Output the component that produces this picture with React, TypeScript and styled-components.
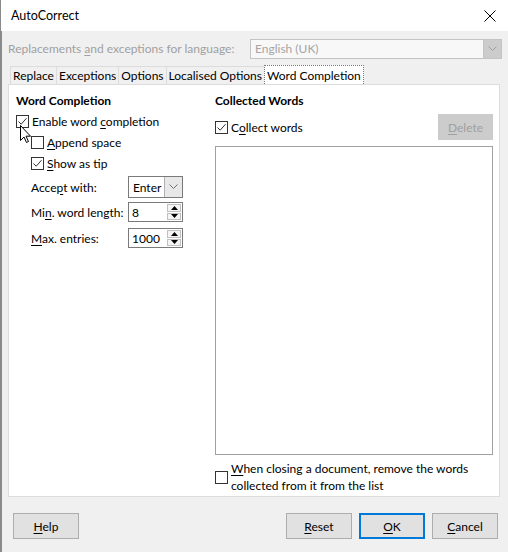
import * as React from 'react';
import styled, { createGlobalStyle } from 'styled-components';

const Global = createGlobalStyle`
  html, body {
    margin: 0;
    padding: 0;
    background: #f1f0f1;
  }
  body {
    font-family: Lato, "Noto Sans", sans-serif;
    font-size: 12px;
    color: #000;
    white-space: nowrap;
  }
`;

const Window = styled.div`
  position: relative;
  width: 508px;
  height: 552px;
  box-sizing: border-box;
  background: #f1f0f1;
  display: flex;
  flex-direction: column;
  overflow: hidden;
`;

const TitleBar = styled.div`
  height: 31px;
  flex-shrink: 0;
  background: #fff;
  display: flex;
  align-items: center;
  justify-content: space-between;
  padding: 0 12px 0 10px;
  border-left: 1px solid #8a8a8a;
`;

const Title = styled.span`
  font-size: 12.5px;
  margin-top: -1px;
`;

const Body = styled.div`
  flex: 1;
  display: flex;
  flex-direction: column;
  border-left: 2px solid #8a8a8a;
  padding: 7px 6px 0 6px;
`;

const LangRow = styled.div`
  display: flex;
  align-items: center;
  justify-content: space-between;
  height: 21px;
`;

const Muted = styled.span`
  color: #a0a0a0;
`;

const U = styled.span`
  text-decoration: underline;
  text-underline-offset: 2px;
`;

const Combo = styled.div<{ $w: number; $h?: number; $disabled?: boolean }>`
  width: ${(p) => p.$w}px;
  height: ${(p) => p.$h || 20}px;
  box-sizing: border-box;
  border: 1px solid ${(p) => (p.$disabled ? '#c4c4c4' : '#7a7a7a')};
  background: ${(p) => (p.$disabled ? '#f8f8f8' : '#fff')};
  color: ${(p) => (p.$disabled ? '#a5a5a5' : '#000')};
  display: flex;
  align-items: center;
  padding-left: 4px;
`;

const ComboText = styled.span`
  flex: 1;
`;

const DropBtn = styled.div<{ $disabled?: boolean }>`
  width: 17px;
  height: 100%;
  display: flex;
  align-items: center;
  justify-content: center;
  background: ${(p) => (p.$disabled ? '#cccccc' : '#e8e8e8')};
  border-left: 1px solid ${(p) => (p.$disabled ? '#c4c4c4' : '#b0b0b0')};
`;

const Tabs = styled.div`
  display: flex;
  align-items: flex-end;
  margin: 6px 0 0 2px;
  height: 19px;
`;

const Tab = styled.div<{ $active?: boolean }>`
  height: ${(p) => (p.$active ? 19 : 18)}px;
  box-sizing: border-box;
  display: flex;
  align-items: center;
  padding: 0 2px;
  background: ${(p) => (p.$active ? '#fff' : '#f1f0f1')};
  border: 1px ${(p) => (p.$active ? 'dotted #777' : 'solid #dcdcdc')};
  border-bottom: none;
  margin-right: ${(p) => (p.$active ? 0 : -1)}px;
  position: relative;
  z-index: ${(p) => (p.$active ? 1 : 0)};
`;

const Panel = styled.div`
  background: #fff;
  border: 1px solid #dcdcdc;
  width: 492px;
  height: 413px;
  flex-shrink: 0;
  box-sizing: border-box;
  display: flex;
  padding: 7px 6px 0 7px;
`;

const LeftCol = styled.div`
  width: 199px;
  display: flex;
  flex-direction: column;
`;

const RightCol = styled.div`
  width: 278px;
  display: flex;
  flex-direction: column;
`;

const Heading = styled.div`
  font-weight: bold;
  height: 17px;
  line-height: 17px;
`;

const CheckRow = styled.label<{ $indent?: number; $top?: number }>`
  display: flex;
  align-items: center;
  gap: 3px;
  margin-left: ${(p) => p.$indent || 0}px;
  margin-top: ${(p) => p.$top || 0}px;
  height: 21px;
`;

const Box = styled.span`
  width: 13px;
  height: 13px;
  box-sizing: border-box;
  border: 1px solid #333;
  background: #fff;
  display: inline-flex;
  align-items: center;
  justify-content: center;
  flex-shrink: 0;
`;

const FieldRow = styled.div<{ $top: number }>`
  display: flex;
  align-items: center;
  margin-left: 15px;
  margin-top: ${(p) => p.$top}px;
`;

const FieldLabel = styled.span`
  width: 97px;
`;

const Spin = styled.div`
  width: 55px;
  height: 20px;
  box-sizing: border-box;
  border: 1px solid #7a7a7a;
  background: #fff;
  display: flex;
  align-items: center;
  padding-left: 3px;
`;

const SpinBtns = styled.div`
  width: 15px;
  height: 100%;
  display: flex;
  flex-direction: column;
  justify-content: center;
  gap: 1px;
  padding: 1px 1px 1px 0;
  box-sizing: border-box;
`;

const SpinBtn = styled.div`
  flex: 1;
  border: 1px solid #c0c0c0;
  background: #f4f4f4;
  display: flex;
  align-items: center;
  justify-content: center;
`;

const CollectRow = styled.div`
  display: flex;
  align-items: center;
  justify-content: space-between;
  margin-top: 5px;
  height: 26px;
`;

const Button = styled.div<{ $w?: number; $disabled?: boolean; $default?: boolean }>`
  width: ${(p) => p.$w || 66}px;
  height: 26px;
  box-sizing: border-box;
  display: flex;
  align-items: center;
  justify-content: center;
  background: ${(p) => (p.$disabled ? '#cccccc' : '#e1e1e1')};
  color: ${(p) => (p.$disabled ? '#a0a0a0' : '#000')};
  border: 1px solid ${(p) => (p.$disabled ? '#cccccc' : p.$default ? '#0078d7' : '#adadad')};
  box-shadow: ${(p) => (p.$default ? 'inset 0 0 0 1px #0078d7' : 'none')};
`;

const ListBox = styled.div`
  margin-top: 6px;
  height: 309px;
  flex-shrink: 0;
  box-sizing: border-box;
  border: 1px solid #a0a0a0;
  background: #fff;
`;

const WrapCheck = styled.div`
  display: flex;
  align-items: center;
  gap: 3px;
  margin-top: 5px;
  line-height: 17px;
`;

const Footer = styled.div`
  display: flex;
  align-items: center;
  padding: 16px 4px 0 5px;
  gap: 7px;
`;

const Spacer = styled.div`
  flex: 1;
`;

const Cursor = styled.svg`
  position: absolute;
  left: 20px;
  top: 125px;
`;

const Check = () => (
  <svg width="11" height="11" viewBox="0 0 11 11">
    <path d="M1.5 5.5 L4.2 8.2 L9.5 2.2" fill="none" stroke="#333" strokeWidth="1" />
  </svg>
);

const Chevron = ({ color }: { color: string }) => (
  <svg width="9" height="6" viewBox="0 0 9 6">
    <path d="M0.5 0.5 L4.5 4.5 L8.5 0.5" fill="none" stroke={color} strokeWidth="1" />
  </svg>
);

const Tri = ({ up }: { up?: boolean }) => (
  <svg width="7" height="4" viewBox="0 0 7 4">
    <path d={up ? 'M0 4 L3.5 0 L7 4 Z' : 'M0 0 L3.5 4 L7 0 Z'} fill="#000" />
  </svg>
);

const CheckBox = ({ checked }: { checked?: boolean }) => <Box>{checked && <Check />}</Box>;

const SpinField = ({ value }: { value: string }) => (
  <Spin>
    <ComboText>{value}</ComboText>
    <SpinBtns>
      <SpinBtn>
        <Tri up />
      </SpinBtn>
      <SpinBtn>
        <Tri />
      </SpinBtn>
    </SpinBtns>
  </Spin>
);

const App = () => (
  <Window>
    <Global />
    <TitleBar>
      <Title>AutoCorrect</Title>
      <svg width="12" height="12" viewBox="0 0 12 12">
        <path d="M0.5 0.5 L11.5 11.5 M11.5 0.5 L0.5 11.5" stroke="#000" strokeWidth="1" />
      </svg>
    </TitleBar>
    <Body>
      <LangRow>
        <Muted>
          Replacements <U>a</U>nd exceptions for language:
        </Muted>
        <Combo $w={252} $disabled>
          <ComboText>English (UK)</ComboText>
          <DropBtn $disabled>
            <Chevron color="#a0a0a0" />
          </DropBtn>
        </Combo>
      </LangRow>
      <Tabs>
        <Tab>Replace</Tab>
        <Tab>Exceptions</Tab>
        <Tab>Options</Tab>
        <Tab>Localised Options</Tab>
        <Tab $active>Word Completion</Tab>
      </Tabs>
      <Panel>
        <LeftCol>
          <Heading>Word Completion</Heading>
          <CheckRow $top={2}>
            <CheckBox checked />
            <span>
              Enable word <U>c</U>ompletion
            </span>
          </CheckRow>
          <CheckRow $indent={15}>
            <CheckBox />
            <span>
              <U>A</U>ppend space
            </span>
          </CheckRow>
          <CheckRow $indent={15}>
            <CheckBox checked />
            <span>
              <U>S</U>how as tip
            </span>
          </CheckRow>
          <FieldRow $top={2}>
            <FieldLabel>
              Acce<U>p</U>t with:
            </FieldLabel>
            <Combo $w={55} $h={22}>
              <ComboText>Enter</ComboText>
              <DropBtn>
                <Chevron color="#707070" />
              </DropBtn>
            </Combo>
          </FieldRow>
          <FieldRow $top={4}>
            <FieldLabel>
              Mi<U>n</U>. word length:
            </FieldLabel>
            <SpinField value="8" />
          </FieldRow>
          <FieldRow $top={6}>
            <FieldLabel>
              <U>M</U>ax. entries:
            </FieldLabel>
            <SpinField value="1000" />
          </FieldRow>
        </LeftCol>
        <RightCol>
          <Heading>Collected Words</Heading>
          <CollectRow>
            <CheckRow>
              <CheckBox checked />
              <span>
                C<U>o</U>llect words
              </span>
            </CheckRow>
            <Button $w={55} $disabled>
              <span>
                <U>D</U>elete
              </span>
            </Button>
          </CollectRow>
          <ListBox />
          <WrapCheck>
            <CheckBox />
            <span>
              <U>W</U>hen closing a document, remove the words
              <br />
              collected from it from the list
            </span>
          </WrapCheck>
        </RightCol>
      </Panel>
      <Footer>
        <Button>
          <span>
            <U>H</U>elp
          </span>
        </Button>
        <Spacer />
        <Button>
          <span>
            <U>R</U>eset
          </span>
        </Button>
        <Button $default>
          <span>
            <U>O</U>K
          </span>
        </Button>
        <Button>
          <span>
            <U>C</U>ancel
          </span>
        </Button>
      </Footer>
    </Body>
    <Cursor width="12" height="19" viewBox="0 0 12 19">
      <path d="M0.5 0.5 L0.5 15.5 L4 12 L6.5 17.5 L8.5 16.5 L6 11.2 L10.5 11.2 Z" fill="#fff" stroke="#000" strokeWidth="1" />
    </Cursor>
  </Window>
);

export default App;
